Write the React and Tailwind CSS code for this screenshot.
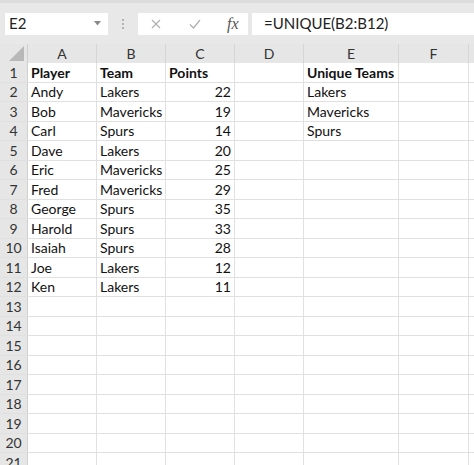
import React from 'react'

const cols = [
  { key: 'A', w: 'w-[69px]' },
  { key: 'B', w: 'w-[69px]' },
  { key: 'C', w: 'w-[69px]' },
  { key: 'D', w: 'w-[69px]' },
  { key: 'E', w: 'w-[95px]' },
  { key: 'F', w: 'w-[70px]' },
  { key: 'G', w: 'w-[69px]', hidden: true },
]

const data = [
  ['Player', 'Team', 'Points', '', 'Unique Teams'],
  ['Andy', 'Lakers', 22, '', 'Lakers'],
  ['Bob', 'Mavericks', 19, '', 'Mavericks'],
  ['Carl', 'Spurs', 14, '', 'Spurs'],
  ['Dave', 'Lakers', 20],
  ['Eric', 'Mavericks', 25],
  ['Fred', 'Mavericks', 29],
  ['George', 'Spurs', 35],
  ['Harold', 'Spurs', 33],
  ['Isaiah', 'Spurs', 28],
  ['Joe', 'Lakers', 12],
  ['Ken', 'Lakers', 11],
]

function Toolbar() {
  return (
    <div className="flex h-[44px] items-center border-t-[3px] border-[#dcdcdc] bg-[#e8e8e8] pl-[5px]">
      <div className="flex h-[22px] w-[103px] items-center justify-between bg-white pl-[4px] pr-[7px]">
        <span className="text-[15px] text-[#222]">E2</span>
        <svg width="7" height="5" viewBox="0 0 7 5">
          <path d="M0 0h7L3.5 4.5z" fill="#8a8a8a" />
        </svg>
      </div>
      <div className="flex w-[30px] flex-col items-center gap-[2px]">
        <span className="h-[2px] w-[2px] rounded-full bg-[#a0a0a0]" />
        <span className="h-[2px] w-[2px] rounded-full bg-[#a0a0a0]" />
        <span className="h-[2px] w-[2px] rounded-full bg-[#a0a0a0]" />
      </div>
      <div className="flex h-[22px] w-[110px] items-center bg-white">
        <svg className="ml-[13px]" width="10" height="10" viewBox="0 0 10 10">
          <path d="M1 1l8 8M9 1l-8 8" stroke="#b0b0b0" strokeWidth="1.2" />
        </svg>
        <svg className="ml-[28px]" width="12" height="10" viewBox="0 0 12 10">
          <path d="M1 5.5l3.5 3.5L11 1" stroke="#b0b0b0" strokeWidth="1.2" fill="none" />
        </svg>
        <span className="ml-[26px] font-['Liberation_Serif',serif] text-[16px] italic text-[#555]">fx</span>
      </div>
      <div className="ml-[4px] flex h-[22px] flex-1 items-center bg-white pl-[12px]">
        <span className="text-[15px] text-[#222]">=UNIQUE(B2:B12)</span>
      </div>
    </div>
  )
}

function Header() {
  return (
    <div className="flex h-[19px] bg-[#e6e6e6]">
      <div className="relative w-[28px] shrink-0 border-r border-[#d0d0d0]">
        <svg className="absolute bottom-[2px] right-[3px]" width="15" height="15" viewBox="0 0 15 15">
          <path d="M15 0V15H0z" fill="#b8b8b8" />
        </svg>
      </div>
      {cols.map((c) => (
        <div
          key={c.key}
          className={`${c.w} flex shrink-0 items-center justify-center border-r border-[#d6d6d6] text-[14px] text-[#333]`}
        >
          {c.hidden ? '' : c.key}
        </div>
      ))}
    </div>
  )
}

function Row({ n, cells = [] }) {
  return (
    <div className="flex h-[19.5px] border-b border-[#e0e0e0]">
      <div className="flex w-[28px] shrink-0 items-center justify-center border-r border-[#d0d0d0] bg-[#e6e6e6] text-[14px] text-[#333]">
        {n}
      </div>
      {cols.map((c, i) => {
        const v = cells[i]
        const isNum = typeof v === 'number'
        return (
          <div
            key={c.key}
            className={`${c.w} flex shrink-0 items-center overflow-visible whitespace-nowrap border-r border-[#e0e0e0] px-[3px] text-[14px] text-[#111] ${isNum ? 'justify-end' : ''} ${n === 1 ? 'font-bold' : ''}`}
          >
            {v}
          </div>
        )
      })}
    </div>
  )
}

export default function App() {
  const rows = []
  for (let i = 1; i <= 21; i++) rows.push(<Row key={i} n={i} cells={data[i - 1]} />)
  return (
    <div className="h-[465px] w-[474px] overflow-hidden bg-white font-['Lato',sans-serif]">
      <Toolbar />
      <Header />
      {rows}
    </div>
  )
}
